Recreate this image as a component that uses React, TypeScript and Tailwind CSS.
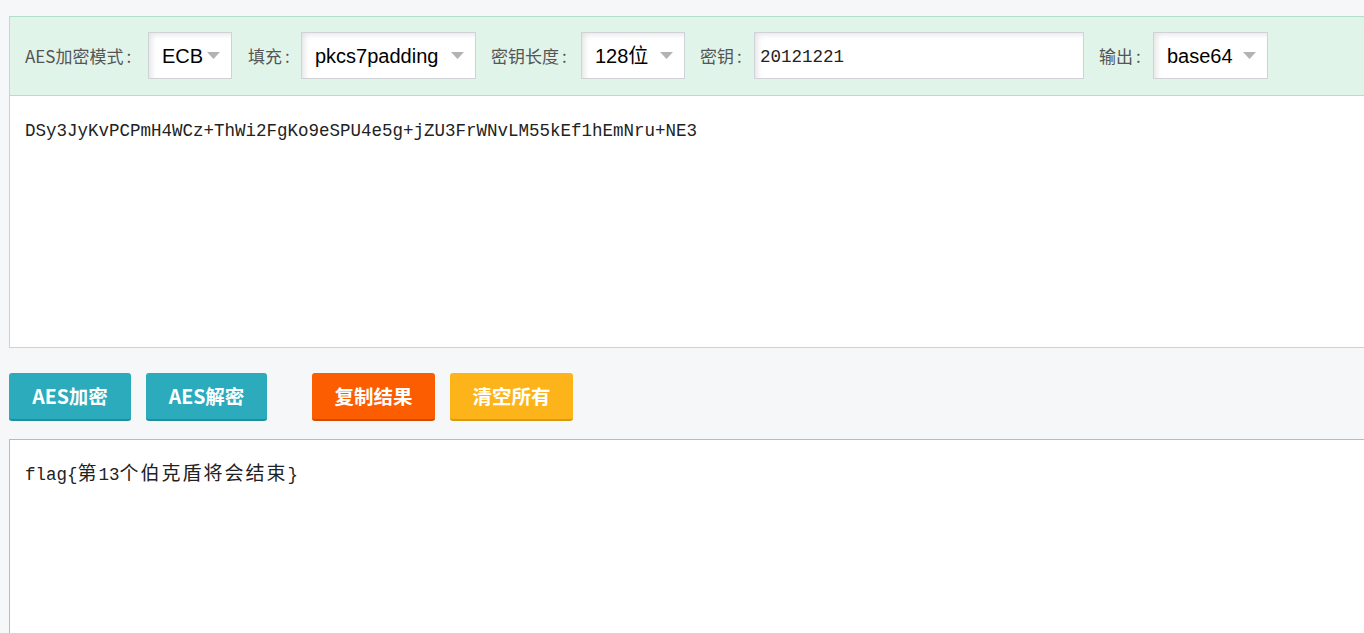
import React from "react";

const Caret = () => (
  <svg width="13" height="7" viewBox="0 0 13 7" className="shrink-0">
    <path d="M0 0 H13 L6.5 7 Z" fill="#b3b3b3" />
  </svg>
);

const Select = ({ value, w }: { value: string; w: string }) => (
  <div
    className={`${w} h-[47px] shrink-0 bg-white border border-[#cfd2d6] flex items-center justify-between pl-[13px] pr-[11px] shadow-[inset_5px_4px_6px_-3px_rgba(0,0,0,0.12)]`}
  >
    <span className="text-[20px] text-black" style={{ fontFamily: '"Liberation Sans", "Noto Sans CJK SC", sans-serif' }}>
      {value}
    </span>
    <Caret />
  </div>
);

const Label = ({ text, w, ml }: { text: string; w: string; ml?: string }) => (
  <div className={`${w} ${ml ?? ""} shrink-0 text-[17px] text-[#555] whitespace-nowrap`}>
    {text}
    <span className="ml-[3px]">:</span>
  </div>
);

const mono = { fontFamily: '"Liberation Mono", "Noto Sans CJK SC", monospace' };

export default function App() {
  return (
    <div
      className="w-[1364px] h-[633px] overflow-hidden bg-[#f6f7f9] pt-4 pl-[9px]"
      style={{ fontFamily: '"Noto Sans CJK SC", "Liberation Sans", sans-serif' }}
    >
      <div className="w-[1400px] border-t border-l border-b border-[#b5dfc8]">
        <div className="h-[79px] bg-[#e1f4ea] border-b border-[#b5dfc8] flex items-start pt-[15px] pl-[15px]">
          <div className="flex items-center h-[47px]">
            <Label text="AES加密模式" w="w-[123px]" />
            <Select value="ECB" w="w-[84px]" />
            <Label text="填充" w="w-[53px]" ml="ml-[16px]" />
            <Select value="pkcs7padding" w="w-[175px]" />
            <Label text="密钥长度" w="w-[90px]" ml="ml-[15px]" />
            <Select value="128位" w="w-[104px]" />
            <Label text="密钥" w="w-[54px]" ml="ml-[15px]" />
            <div className="w-[330px] h-[47px] shrink-0 bg-white border border-[#cfd2d6] flex items-center pl-[5px] pt-[3px] shadow-[inset_5px_4px_6px_-3px_rgba(0,0,0,0.12)]">
              <span className="text-[17.5px] text-[#222]" style={mono}>20121221</span>
            </div>
            <Label text="输出" w="w-[54px]" ml="ml-[15px]" />
            <Select value="base64" w="w-[115px]" />
          </div>
        </div>
        <div className="h-[251px] bg-white pl-[15px] pt-[23px]">
          <div className="text-[17.5px] text-[#222] leading-[24px]" style={mono}>
            DSy3JyKvPCPmH4WCz+ThWi2FgKo9eSPU4e5g+jZU3FrWNvLM55kEf1hEmNru+NE3
          </div>
        </div>
      </div>

      <div className="flex items-start mt-[25px] h-[48px]">
        <button className="w-[122px] h-[48px] rounded-[3px] bg-[#2babbc] border-b-2 border-[#1f8f9d] text-white font-bold text-[19.5px]">
          AES加密
        </button>
        <button className="ml-[15px] w-[121px] h-[48px] rounded-[3px] bg-[#2babbc] border-b-2 border-[#1f8f9d] text-white font-bold text-[19.5px]">
          AES解密
        </button>
        <button className="ml-[45px] w-[123px] h-[48px] rounded-[3px] bg-[#fb5d00] border-b-2 border-[#d24a00] text-white font-bold text-[19.5px]">
          复制结果
        </button>
        <button className="ml-[15px] w-[123px] h-[48px] rounded-[3px] bg-[#fdb41a] border-b-2 border-[#d99a10] text-white font-bold text-[19.5px]">
          清空所有
        </button>
      </div>

      <div className="mt-[18px] w-[1400px] h-[300px] bg-white border-t border-l border-[#a9bdd6] pl-[15px] pt-[20px]">
        <div className="text-[17.5px] text-[#222] leading-[24px]" style={mono}>
          flag{"{"}
          <span className="tracking-[2px] text-[19px]" style={{ fontFamily: '"Noto Sans CJK SC", serif' }}>第</span>
          13
          <span className="tracking-[2px] text-[19px]" style={{ fontFamily: '"Noto Sans CJK SC", serif' }}>个伯克盾将会结束</span>
          {"}"}
        </div>
      </div>
    </div>
  );
}
